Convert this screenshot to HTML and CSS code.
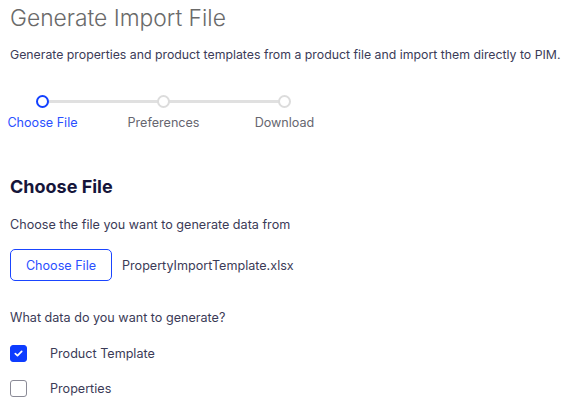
FILE: index.html
```html
<!DOCTYPE html>
<html>
<head>
<meta charset="utf-8">
<link rel="stylesheet" href="styles.css">
</head>
<body>
<div class="page">
  <h1 class="title">Generate Import File</h1>
  <p class="subtitle">Generate properties and product templates from a product file and import them directly to PIM.</p>

  <ol class="stepper">
    <li class="step active"><span class="dot"></span><span class="step-label">Choose File</span></li>
    <li class="step"><span class="dot"></span><span class="step-label">Preferences</span></li>
    <li class="step"><span class="dot"></span><span class="step-label">Download</span></li>
  </ol>

  <h2 class="section-title">Choose File</h2>
  <p class="text">Choose the file you want to generate data from</p>
  <div class="file-row">
    <button class="btn-outline">Choose File</button>
    <span class="file-name">PropertyImportTemplate.xlsx</span>
  </div>

  <p class="text question">What data do you want to generate?</p>
  <div class="options">
    <label class="option">
      <span class="checkbox checked">
        <svg width="11" height="11" viewBox="0 0 11 11"><path d="M2.3 5.6 L4.5 7.7 L8.7 3.3" fill="none" stroke="#fff" stroke-width="1.7" stroke-linecap="round" stroke-linejoin="round"/></svg>
      </span>
      <span class="option-label">Product Template</span>
    </label>
    <label class="option">
      <span class="checkbox"></span>
      <span class="option-label">Properties</span>
    </label>
  </div>
</div>
</body>
</html>
```

FILE: styles.css
```css
* { box-sizing: border-box; }
html, body { margin: 0; padding: 0; background: #fff; }
body {
  font-family: Inter, "Noto Sans", sans-serif;
  color: #3b3b57;
  overflow: hidden;
}
.page {
  padding: 4px 10px 0 10px;
}
.title {
  margin: 0;
  font-size: 22.8px;
  line-height: 28px;
  font-weight: 300;
  color: #6a6a6a;
}
.subtitle {
  margin: 15px 0 0;
  font-size: 12.3px;
  line-height: 16px;
  color: #3b3b57;
  white-space: nowrap;
}
.stepper {
  list-style: none;
  margin: 32px 0 0 -28px;
  padding: 0;
  display: flex;
}
.step {
  position: relative;
  width: 121px;
  display: flex;
  flex-direction: column;
  align-items: center;
}
.step + .step::before {
  content: "";
  position: absolute;
  top: 5px;
  left: -50%;
  width: 100%;
  height: 3px;
  background: #e0e0e0;
}
.dot {
  position: relative;
  z-index: 1;
  width: 13px;
  height: 13px;
  border-radius: 50%;
  border: 2px solid #dcdcdc;
  background: #fff;
}
.step.active .dot { border-color: #1240ff; }
.step-label {
  margin-top: 7px;
  font-size: 12.6px;
  line-height: 16px;
  color: #66666f;
}
.step.active .step-label { color: #2a50ff; }
.section-title {
  margin: 45px 0 0;
  font-size: 18px;
  line-height: 22px;
  font-weight: 700;
  color: #15153a;
}
.text {
  margin: 19px 0 0;
  font-size: 12.6px;
  line-height: 16px;
  color: #3b3b57;
}
.file-row {
  margin-top: 16px;
  display: flex;
  align-items: center;
  gap: 10px;
}
.btn-outline {
  width: 102px;
  height: 32px;
  border: 1px solid #1a45ff;
  border-radius: 5px;
  background: #fff;
  color: #2a50ff;
  font-family: inherit;
  font-size: 12.6px;
  padding: 0;
}
.file-name {
  font-size: 12.6px;
  color: #3b3b57;
}
.question { margin-top: 29px; }
.options {
  margin-top: 19px;
  display: flex;
  flex-direction: column;
  gap: 18px;
}
.option {
  display: flex;
  align-items: center;
  gap: 23px;
}
.checkbox {
  width: 17px;
  height: 17px;
  border-radius: 3px;
  border: 1px solid #8a8a96;
  background: #fff;
  display: flex;
  align-items: center;
  justify-content: center;
}
.checkbox.checked {
  background: #0d3cff;
  border-color: #0d3cff;
}
.option-label {
  font-size: 12.6px;
  line-height: 16px;
  color: #3b3b57;
}
```
